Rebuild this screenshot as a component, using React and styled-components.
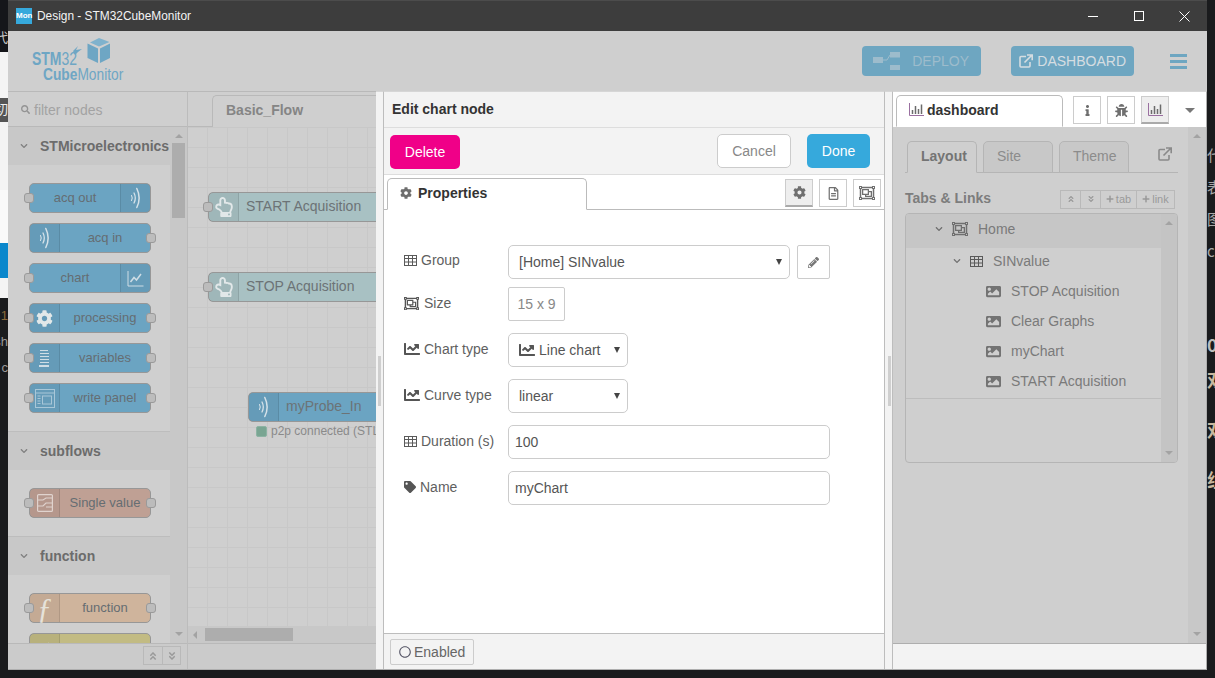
import React from 'react';
import styled, { createGlobalStyle } from 'styled-components';
import {
  FaCog, FaTag, FaChartLine, FaPencilAlt, FaBug, FaInfo, FaRegFileAlt, FaImage,
  FaAngleDoubleUp, FaAngleDoubleDown, FaPlus, FaSearch, FaRegObjectGroup,
  FaRegHandPointUp, FaChevronDown, FaRegCircle, FaRandom,
} from 'react-icons/fa';

const GlobalStyle = createGlobalStyle`
  html, body { margin: 0; padding: 0; height: 678px; overflow: hidden; background: #1a1b1d; }
  body { font-family: "Liberation Sans", Arial, sans-serif; font-size: 14px; }
  * { box-sizing: border-box; }
`;

const Desktop = styled.div`
  display: flex;
  width: 1215px;
  height: 678px;
  overflow: hidden;
`;

const LeftStrip = styled.div`
  width: 8px;
  flex: none;
  display: flex;
  flex-direction: column;
  overflow: hidden;
`;

const Slice = styled.div`
  height: ${p => p.$h}px;
  flex: none;
  display: flex;
  justify-content: flex-end;
  background: ${p => p.$bg};
  color: ${p => p.$fg || '#ccc'};
  font: 13px/${p => p.$h}px "Liberation Sans", "Noto Sans CJK SC", sans-serif;
  white-space: nowrap;
`;

const RightStrip = styled.div`
  width: 8px;
  flex: none;
  display: flex;
  flex-direction: column;
  overflow: hidden;
  background: #1a1b1d;
  padding-top: 147px;
`;

const Fragment = styled.div`
  height: 16px;
  margin-bottom: ${p => p.$gap}px;
  font: ${p => (p.$bold ? 'bold 18px' : '15px')}/16px "Noto Sans CJK SC", sans-serif;
  color: ${p => p.$fg || '#a8a8a8'};
  white-space: nowrap;
`;

const Window = styled.div`
  width: 1199px;
  height: 670px;
  flex: none;
  display: flex;
  flex-direction: column;
  border-bottom: 1px solid #aeaeae;
`;

const TitleBar = styled.div`
  height: 31px;
  flex: none;
  display: flex;
  align-items: center;
  background: #3d3d3d;
  border-top: 1px solid #4c4c4c;
  padding-left: 8px;
  color: #f4f4f4;
  font-size: 11.9px;
`;

const AppIcon = styled.div`
  width: 16px;
  height: 16px;
  margin-right: 5px;
  background: #36a9dc;
  color: #fff;
  font: bold 8px/16px "Liberation Sans", sans-serif;
  text-align: center;
`;

const WinControls = styled.div`
  margin-left: auto;
  display: flex;
  height: 100%;
`;

const WinButton = styled.div`
  width: 45.5px;
  display: flex;
  align-items: center;
  justify-content: center;
`;

const Header = styled.header`
  height: 60px;
  flex: none;
  display: flex;
  align-items: center;
  background: #cfcfcf;
  padding: 0 20px 0 24px;
`;

const Logo = styled.svg`
  width: 92px;
  height: 46px;
  display: block;
  margin-top: -3px;
`;

const HeaderButton = styled.div`
  height: 30px;
  width: ${p => p.$w}px;
  margin-left: ${p => p.$ml || 0};
  display: flex;
  align-items: center;
  justify-content: flex-end;
  gap: ${p => p.$gap || 4}px;
  padding-right: ${p => p.$pr}px;
  background: #6ea6c1;
  border-radius: 4px;
  color: ${p => p.$fg};
  font-size: 14px;
`;

const Hamburger = styled.div`
  width: 17px;
  display: flex;
  flex-direction: column;
  gap: 3px;
  margin-left: 36px;
  span { display: block; height: 3px; background: #6ea6c1; }
`;

const Workspace = styled.div`
  flex: 1;
  min-height: 0;
  display: flex;
`;

const Palette = styled.aside`
  width: 180px;
  flex: none;
  display: flex;
  flex-direction: column;
  background: #cfcfcf;
  border-top: 1px solid #b9b9b9;
  border-right: 1px solid #bcbcbc;
`;

const FilterBar = styled.div`
  height: 35px;
  flex: none;
  display: flex;
  align-items: center;
  gap: 4px;
  padding: 1px 0 0 13px;
  border-bottom: 1px solid #b9b9b9;
  color: #a3a3a3;
  font-size: 14px;
  svg { color: #949494; }
`;

const PaletteBody = styled.div`
  flex: 1;
  min-height: 0;
  display: flex;
`;

const CategoryList = styled.div`
  width: 162px;
  flex: none;
  overflow: hidden;
`;

const CategoryHeader = styled.div`
  height: 38px;
  display: flex;
  align-items: center;
  background: #c8c8c8;
  padding-left: 12px;
  color: #6c6c6c;
  font-weight: bold;
  font-size: 14px;
  white-space: nowrap;
`;

const CategoryContent = styled.div`
  padding: 18px 0 ${p => p.$pb ?? 8}px 21px;
  border-bottom: ${p => (p.$open ? 'none' : '1px solid #bdbdbd')};
`;

const PaletteNode = styled.div`
  position: relative;
  width: 122px;
  height: 30px;
  margin-bottom: 10px;
  display: flex;
  flex-direction: ${p => (p.$iconRight ? 'row-reverse' : 'row')};
  background: ${p => p.$bg};
  border: 1px solid #979797;
  border-radius: 5px;
  color: #656d72;
  font-size: 13px;
  &:last-child { margin-bottom: 0; }
`;

const IconCell = styled.div`
  width: 30px;
  flex: none;
  display: flex;
  align-items: center;
  justify-content: center;
  background: rgba(0, 0, 0, 0.05);
  ${p => (p.$right ? 'border-left' : 'border-right')}: 1px solid rgba(0, 0, 0, 0.1);
  color: #e2e8e9;
`;

const NodeLabel = styled.div`
  flex: 1;
  text-align: center;
  line-height: 27px;
  white-space: nowrap;
`;

const Port = styled.span`
  position: absolute;
  top: 9px;
  ${p => p.$side}: -6px;
  width: 10px;
  height: 10px;
  background: #bcbcbc;
  border: 1px solid #9a9a9a;
  border-radius: 3px;
`;

const VScroll = styled.div`
  flex: 1;
  display: flex;
  flex-direction: column;
  align-items: center;
  background: ${p => p.$bg || '#c8c8c8'};
  padding-top: ${p => p.$pt ?? 7}px;
  padding-bottom: ${p => p.$pb ?? 7}px;
`;

const Arrow = styled.span`
  width: 0;
  height: 0;
  flex: none;
  border-left: 4px solid transparent;
  border-right: 4px solid transparent;
  ${p => (p.$down ? 'border-top' : 'border-bottom')}: 4px solid #a3a3a3;
  margin-top: ${p => (p.$auto ? 'auto' : 0)};
`;

const ScrollThumb = styled.div`
  width: 13px;
  height: ${p => p.$h}px;
  margin-top: 5px;
  background: #adadad;
`;

const BottomBar = styled.div`
  height: 26px;
  flex: none;
  display: flex;
  align-items: center;
  justify-content: flex-end;
  padding-right: 6px;
  background: #cbcbcb;
  border-top: 1px solid #b9b9b9;
`;

const MiniGroup = styled.div`
  display: flex;
  margin-top: ${p => p.$mt ?? -2}px;
`;

const MiniButton = styled.div`
  width: ${p => p.$w || 19}px;
  height: 19px;
  display: flex;
  align-items: center;
  justify-content: center;
  gap: 2px;
  border: 1px solid #b9b9b9;
  margin-left: -1px;
  color: #9a9a9a;
  font-size: 11px;
  font-weight: normal;
`;

const Canvas = styled.main`
  width: 188px;
  flex: none;
  display: flex;
  flex-direction: column;
  background: #cfcfcf;
  border-top: 1px solid #b9b9b9;
`;

const TabBar = styled.div`
  height: 35px;
  flex: none;
  display: flex;
  align-items: flex-end;
  padding-left: 24px;
  border-bottom: 1px solid #b9b9b9;
`;

const FlowTab = styled.div`
  flex: 1;
  height: 32px;
  margin-bottom: -1px;
  padding-left: 13px;
  line-height: 28px;
  background: #cfcfcf;
  border: 1px solid #b9b9b9;
  border-bottom: none;
  border-right: none;
  border-top-left-radius: 5px;
  color: #858585;
  font-weight: bold;
  font-size: 14px;
`;

const Grid = styled.div`
  position: relative;
  flex: 1;
  min-height: 0;
  overflow: hidden;
  background-color: #cfcfcf;
  background-image:
    linear-gradient(to right, transparent 19px, #c8c8c8 19px),
    linear-gradient(to bottom, #c8c8c8 1px, transparent 1px);
  background-size: 20px 20px;
`;

const FlowNode = styled(PaletteNode)`
  position: absolute;
  left: ${p => p.$x}px;
  top: ${p => p.$y}px;
  width: 220px;
  margin: 0;
  font-size: 14px;
  color: #6c7376;
  justify-content: flex-start;
`;

const FlowLabel = styled.div`
  padding-left: ${p => p.$pl}px;
  line-height: 27px;
  white-space: nowrap;
`;

const NodeStatus = styled.div`
  position: absolute;
  left: 68px;
  top: 297px;
  display: flex;
  align-items: center;
  gap: 4px;
  color: #8a8a8a;
  font-size: 12px;
  white-space: nowrap;
  i { width: 11px; height: 11px; background: #79a592; border: 1px solid #8cb3a3; border-radius: 2px; }
`;

const HScroll = styled.div`
  height: 17px;
  flex: none;
  display: flex;
  align-items: center;
  background: #c8c8c8;
  padding-left: 5px;
`;

const HThumb = styled.div`
  width: 88px;
  height: 13px;
  margin-left: 8px;
  background: #adadad;
`;

const HArrow = styled.span`
  width: 0;
  height: 0;
  border-top: 4px solid transparent;
  border-bottom: 4px solid transparent;
  border-right: 4px solid #a3a3a3;
`;

const Tray = styled.section`
  flex: none;
  display: flex;
  background: #f3f3f3;
`;

const Gutter = styled.div`
  position: relative;
  width: 7px;
  flex: none;
  background: #f3f3f3;
  border-top: 1px solid #d6d6d6;
`;

const GripHandle = styled.span`
  position: absolute;
  top: 264px;
  left: ${p => p.$left}px;
  width: 3px;
  height: 50px;
  background: #cfcfcf;
`;

const TrayPanel = styled.div`
  width: 502px;
  flex: none;
  display: flex;
  flex-direction: column;
  background: #fff;
  border-left: 1px solid #bdbdbd;
  border-right: 1px solid #bdbdbd;
  border-top: 1px solid #d6d6d6;
`;

const TrayTitle = styled.div`
  height: 36px;
  flex: none;
  padding-left: 8px;
  line-height: 35px;
  background: #f3f3f3;
  border-bottom: 1px solid #ddd;
  color: #333;
  font-weight: bold;
  font-size: 14px;
`;

const TrayToolbar = styled.div`
  height: 47px;
  flex: none;
  display: flex;
  padding: 6px 14px 0 6px;
  background: #f3f3f3;
  border-bottom: 1px solid #ddd;
`;

const ActionButton = styled.div`
  width: ${p => p.$w}px;
  height: 34px;
  margin-left: ${p => p.$ml || 0};
  margin-top: ${p => p.$mt || 0}px;
  text-align: center;
  line-height: ${p => (p.$bordered ? 32 : 34)}px;
  background: ${p => p.$bg};
  color: ${p => p.$fg};
  border: ${p => (p.$bordered ? '1px solid #ccc' : 'none')};
  border-radius: 5px;
  font-size: 14px;
`;

const TabsRow = styled.div`
  height: 35px;
  flex: none;
  display: flex;
  align-items: flex-end;
  padding-left: 3px;
  border-bottom: 1px solid #bbb;
`;

const PropTab = styled.div`
  width: ${p => p.$w}px;
  height: 32px;
  margin-bottom: -1px;
  display: flex;
  align-items: center;
  gap: ${p => p.$gap ?? 6}px;
  padding-left: ${p => p.$pl}px;
  padding-bottom: 3px;
  background: #fff;
  border: 1px solid #bbb;
  border-bottom: 1px solid #fff;
  border-radius: 5px 5px 0 0;
  color: #333;
  font-weight: bold;
  font-size: 14px;
  svg { color: #6e6e6e; }
`;

const IconTabs = styled.div`
  margin-left: auto;
  display: flex;
  gap: 6px;
  align-self: flex-start;
  margin-top: 4px;
  padding-right: 3px;
`;

const IconTab = styled.div`
  width: 28px;
  height: 28px;
  display: flex;
  align-items: center;
  justify-content: center;
  background: ${p => (p.$active ? '#eee' : '#fff')};
  border: 1px solid #ccc;
  border-bottom: ${p => (p.$active ? '2px solid #aaa' : '1px solid #ccc')};
  color: #6f6f6f;
`;

const FormBody = styled.div`
  flex: 1;
  min-height: 0;
  padding: 35px 0 0 20px;
`;

const FormRow = styled.div`
  display: flex;
  align-items: center;
  margin-bottom: ${p => p.$mb ?? 12}px;
`;

const FormLabel = styled.label`
  width: 104px;
  flex: none;
  display: flex;
  align-items: center;
  gap: ${p => p.$gap ?? 4}px;
  margin-bottom: ${p => p.$mb ?? 2}px;
  color: #5f5f5f;
  font-size: 14px;
  white-space: nowrap;
  svg { color: #555; }
`;

const SelectBox = styled.div`
  width: ${p => p.$w}px;
  height: 34px;
  display: flex;
  align-items: center;
  gap: 4px;
  padding: 0 7px 0 10px;
  background: #fff;
  border: 1px solid #ccc;
  border-radius: 5px;
  color: #555;
  font-size: 14px;
  svg { color: #555; }
`;

const Caret = styled.span`
  margin-left: auto;
  width: 0;
  height: 0;
  border-left: 3px solid transparent;
  border-right: 3px solid transparent;
  border-top: 6px solid #444;
`;

const EditButton = styled.div`
  width: 33px;
  height: 34px;
  margin-left: 7px;
  display: flex;
  align-items: center;
  justify-content: center;
  background: #fff;
  border: 1px solid #ccc;
  border-radius: 2px;
  color: #777;
`;

const SizeButton = styled.div`
  width: 57px;
  height: 34px;
  text-align: center;
  line-height: 32px;
  border: 1px solid #ccc;
  border-radius: 2px;
  color: #888;
  font-size: 14px;
`;

const TextInput = styled.input`
  width: 322px;
  height: 34px;
  padding: 0 6px;
  background: #fff;
  border: 1px solid #ccc;
  border-radius: 5px;
  color: #555;
  font: 14px "Liberation Sans", sans-serif;
  outline: none;
`;

const TrayFooter = styled.div`
  height: 36px;
  flex: none;
  padding: 5px 0 0 6px;
  background: #f3f3f3;
  border-top: 1px solid #bdbdbd;
`;

const EnabledButton = styled.div`
  width: 84px;
  height: 26px;
  display: flex;
  align-items: center;
  gap: 3px;
  padding-left: 8px;
  border: 1px solid #ccc;
  border-radius: 2px;
  color: #666;
  font-size: 14px;
`;

const Sidebar = styled.aside`
  width: 315px;
  flex: none;
  display: flex;
  flex-direction: column;
  background: #f3f3f3;
  border-top: 1px solid #d6d6d6;
  border-left: 1px solid #bdbdbd;
  border-right: 1px solid #aeaeae;
`;

const SidebarTabs = styled.div`
  height: 35px;
  flex: none;
  display: flex;
  align-items: flex-end;
  padding: 0 0 1px 3px;
  background: #fff;
`;

const SidebarIcons = styled.div`
  display: flex;
  gap: 6px;
  align-self: flex-start;
  margin: 4px 0 0 10px;
`;

const DropCaret = styled.span`
  width: 0;
  height: 0;
  align-self: center;
  margin: 2px 0 0 16px;
  border-left: 5px solid transparent;
  border-right: 5px solid transparent;
  border-top: 5px solid #777;
`;

const SidebarContent = styled.div`
  flex: 1;
  min-height: 0;
  display: flex;
  background: #cfcfcf;
`;

const DashboardPane = styled.div`
  width: 295px;
  flex: none;
  padding: 14px 10px 0 12px;
`;

const InnerTabs = styled.div`
  display: flex;
  height: 32px;
  gap: 6px;
  padding-left: 2px;
  border-bottom: 1px solid #b5b5b5;
`;

const InnerTab = styled.div`
  width: 70px;
  height: 32px;
  padding-left: ${p => p.$pl}px;
  line-height: 29px;
  background: ${p => (p.$active ? '#cfcfcf' : '#c8c8c8')};
  border: 1px solid #b5b5b5;
  border-bottom: ${p => (p.$active ? '1px solid #cfcfcf' : '1px solid #b5b5b5')};
  border-radius: 5px 5px 0 0;
  color: ${p => (p.$active ? '#747474' : '#8c8c8c')};
  font-weight: ${p => (p.$active ? 'bold' : 'normal')};
  font-size: 14px;
`;

const PopOut = styled.div`
  margin: 6px 6px 0 auto;
  color: #8a8a8a;
`;

const SectionTitle = styled.div`
  height: 40px;
  display: flex;
  align-items: center;
  justify-content: space-between;
  padding: 9px 3px 0 0;
  color: #7d7d7d;
  font-weight: bold;
  font-size: 14px;
`;

const TreeBox = styled.div`
  width: 273px;
  height: 250px;
  display: flex;
  border: 1px solid #b5b5b5;
  border-radius: 4px;
  overflow: hidden;
`;

const TreeList = styled.div`
  width: 255px;
  flex: none;
`;

const TreeGroup = styled.div`
  height: 185px;
  border-bottom: 1px solid #bdbdbd;
`;

const TreeHead = styled.div`
  height: 34px;
  display: flex;
  align-items: center;
  background: #c6c6c6;
  padding: 0 0 4px 29px;
  color: #7a7a7a;
  font-size: 14px;
  svg { color: #6f6f6f; }
`;

const TreeRow = styled.div`
  height: 30px;
  display: flex;
  align-items: center;
  padding-left: ${p => p.$pl}px;
  padding-bottom: 4px;
  color: #7a7a7a;
  font-size: 14px;
  svg { color: #737373; }
`;

const TreeText = styled.span`
  margin-left: 10px;
`;

const Chevron = styled(FaChevronDown)`
  margin-right: ${p => p.$mr}px;
  color: #7f7f7f;
`;

const SidebarFooter = styled.div`
  height: 26px;
  flex: none;
  background: #f3f3f3;
  border-top: 1px solid #aeaeae;
`;

const WaveIcon = () => (
  <svg width="12" height="22" viewBox="0 0 12 22" fill="none" stroke="#d5e2e9" strokeLinecap="round">
    <path d="M1.5 8.5 Q3 11 1.5 13.5" strokeWidth="1.1" />
    <path d="M4 6 Q6.6 11 4 16" strokeWidth="1.3" />
    <path d="M6.8 1.5 Q11.5 11 6.8 20.5" strokeWidth="1.5" />
  </svg>
);

const ChartOutline = () => (
  <svg width="17" height="17" viewBox="0 0 17 17" fill="none" stroke="#cfdde5" strokeWidth="1">
    <path d="M1 1v15h15.5" />
    <path d="M3.5 12 L7 7.5 L9.5 10 L14 4" strokeWidth="1.5" />
  </svg>
);

const LinesIcon = () => (
  <svg width="11" height="17" viewBox="0 0 11 17" fill="#cfdde5">
    <rect x="1" y="0" width="8" height="1" />
    <rect x="1" y="3" width="9" height="1" />
    <rect x="1" y="6" width="9" height="1" />
    <rect x="1" y="9" width="9" height="1" />
    <rect x="1" y="12" width="9" height="1" />
    <rect x="0" y="15" width="10" height="2" />
  </svg>
);

const PanelIcon = () => (
  <svg width="20" height="19" viewBox="0 0 20 19" fill="none" stroke="#a9c7d8" strokeWidth="1">
    <rect x="0.5" y="0.5" width="19" height="18" />
    <path d="M0.5 4h19" />
    <rect x="7.5" y="7" width="9" height="8" />
    <path d="M2.5 7h3M2.5 9.5h3M2.5 12h3M2.5 14.5h3" />
  </svg>
);

const SubflowIcon = () => (
  <svg width="16" height="18" viewBox="0 0 16 18" fill="none" stroke="#e0d3ce" strokeWidth="1.2">
    <rect x="0.6" y="0.6" width="14.8" height="16.8" rx="1" />
    <path d="M1 6h5l3-2h6M1 12h5l3-3h6M9 13h6" />
  </svg>
);

const FuncGlyph = styled.span`
  font: italic 30px/28px "Liberation Serif", serif;
  color: #e6e2da;
`;

const TableIcon = () => (
  <svg width="13" height="11" viewBox="0 0 13 11" fill="none" stroke="#5a5a5a" strokeWidth="1">
    <rect x="0.5" y="0.5" width="12" height="10" />
    <path d="M0 3.5h13M0 7h13M4.5 1v10M8.5 1v10" />
  </svg>
);

const BarsIcon = () => (
  <svg width="15" height="13" viewBox="0 0 15 13" fill="none" stroke="#6b6b6b">
    <path d="M0.5 0v12.5H15" stroke="#9a6fa0" />
    <path d="M3.5 11V7M6.5 11V3M9.5 11V6M12.5 11V1.5" strokeWidth="1.5" />
  </svg>
);

const ExternalIcon = () => (
  <svg width="14" height="14" viewBox="0 0 14 14" fill="none" stroke="currentColor" strokeWidth="1.6">
    <path d="M7 2.5H2a1 1 0 0 0-1 1V12a1 1 0 0 0 1 1h8a1 1 0 0 0 1-1V8" />
    <path d="M5.5 8.5 12.5 1.5M8 1h5.2v5.2" />
  </svg>
);

const DeployIcon = () => (
  <svg width="27" height="18" viewBox="0 0 27 18" fill="#9dbccc">
    <rect x="0" y="5" width="10" height="6" />
    <rect x="17" y="0" width="10" height="5.5" />
    <rect x="17" y="13" width="10" height="5" />
    <path d="M10 8 L14 8 L17 3" fill="none" stroke="#9dbccc" />
  </svg>
);

const LogoArt = () => (
  <Logo viewBox="0 0 92 46">
    <path d="M58 5.5 L67 1 L77.5 5 L67 9.5Z" fill="#7fb2cd" />
    <path d="M55.5 6.5 L66 11.5 V26 L55.5 21Z" fill="#6ea6c4" />
    <path d="M68 11.5 L78 6.5 V21 L68 26Z" fill="#6ea6c4" />
    <path d="M41 14 L46 9 L44 13 L50 12 L46 15 L43 18Z" fill="#6ea6c4" />
    <text transform="translate(0 28) scale(0.776 1)" fontFamily="Liberation Sans" fontSize="18" fill="#6ea6c4">
      <tspan fontWeight="bold">STM</tspan>32
    </text>
    <text transform="translate(11 43) scale(0.81 1)" fontFamily="Liberation Sans" fontSize="17" fill="#6ea6c4">
      <tspan fontWeight="bold">Cube</tspan>Monitor
    </text>
  </Logo>
);

const paletteBlue = '#6ba4c2';

const stmNodes = [
  { label: 'acq out', icon: <WaveIcon />, iconRight: true, left: true },
  { label: 'acq in', icon: <WaveIcon />, right: true },
  { label: 'chart', icon: <ChartOutline />, iconRight: true, left: true },
  { label: 'processing', icon: <FaCog size={17} />, left: true, right: true },
  { label: 'variables', icon: <LinesIcon />, left: true, right: true },
  { label: 'write panel', icon: <PanelIcon />, left: true, right: true },
];

const Node = ({ label, icon, iconRight, left, right, bg = paletteBlue }) => (
  <PaletteNode $bg={bg} $iconRight={iconRight}>
    <IconCell $right={iconRight}>{icon}</IconCell>
    <NodeLabel>{label}</NodeLabel>
    {left && <Port $side="left" />}
    {right && <Port $side="right" />}
  </PaletteNode>
);

const treeItems = ['STOP Acquisition', 'Clear Graphs', 'myChart', 'START Acquisition'];

export default function App() {
  return (
    <Desktop>
      <GlobalStyle />
      <LeftStrip>
        <Slice $h={30} $bg="#15161a" />
        <Slice $h={16} $bg="#15161a">代</Slice>
        <Slice $h={6} $bg="#15161a" />
        <Slice $h={46} $bg="#f4f4f4" />
        <Slice $h={24} $bg="#555" $fg="#eee">切</Slice>
        <Slice $h={68} $bg="#f4f4f4" />
        <Slice $h={53} $bg="#fafafa" />
        <Slice $h={35} $bg="#0a87cc" />
        <Slice $h={20} $bg="#f4f4f4" />
        <Slice $h={10} $bg="#1a1b1d" />
        <Slice $h={16} $bg="#1a1b1d" $fg="#8a6a3a">1</Slice>
        <Slice $h={10} $bg="#1a1b1d" />
        <Slice $h={16} $bg="#1a1b1d" $fg="#999">sh</Slice>
        <Slice $h={10} $bg="#1a1b1d" />
        <Slice $h={16} $bg="#1a1b1d" $fg="#999">c</Slice>
        <Slice $h={302} $bg="#1a1b1d" />
      </LeftStrip>

      <Window>
        <TitleBar>
          <AppIcon>Mon</AppIcon>
          Design - STM32CubeMonitor
          <WinControls>
            <WinButton>
              <svg width="10" height="10"><path d="M0 5.5h10" stroke="#fff" /></svg>
            </WinButton>
            <WinButton>
              <svg width="10" height="10"><rect x="0.5" y="0.5" width="9" height="9" fill="none" stroke="#fff" /></svg>
            </WinButton>
            <WinButton>
              <svg width="11" height="11"><path d="M0.5 0.5l10 10M10.5 0.5l-10 10" stroke="#fff" /></svg>
            </WinButton>
          </WinControls>
        </TitleBar>

        <Header>
          <LogoArt />
          <HeaderButton $w={119} $ml="auto" $pr={12} $gap={12} $fg="#9dbccc">
            <DeployIcon />
            DEPLOY
          </HeaderButton>
          <HeaderButton $w={123} $ml="30px" $pr={8} $gap={4} $fg="#d5dde1">
            <ExternalIcon />
            DASHBOARD
          </HeaderButton>
          <Hamburger><span /><span /><span /></Hamburger>
        </Header>

        <Workspace>
          <Palette>
            <FilterBar>
              <FaSearch size={9} />
              filter nodes
            </FilterBar>
            <PaletteBody>
              <CategoryList>
                <CategoryHeader>
                  <Chevron size={8} $mr={12} />
                  STMicroelectronics
                </CategoryHeader>
                <CategoryContent $pb={18}>
                  {stmNodes.map(n => <Node key={n.label} {...n} />)}
                </CategoryContent>
                <CategoryHeader>
                  <Chevron size={8} $mr={12} />
                  subflows
                </CategoryHeader>
                <CategoryContent $pb={18}>
                  <Node label="Single value" icon={<SubflowIcon />} bg="#bfa094" left right />
                </CategoryContent>
                <CategoryHeader>
                  <Chevron size={8} $mr={12} />
                  function
                </CategoryHeader>
                <CategoryContent $open>
                  <Node label="function" icon={<FuncGlyph>ƒ</FuncGlyph>} bg="#cfb49c" left right />
                  <Node label="switch" icon={<FaRandom size={13} />} bg="#c2bb83" />
                </CategoryContent>
              </CategoryList>
              <VScroll>
                <Arrow />
                <ScrollThumb $h={75} />
                <Arrow $down $auto />
              </VScroll>
            </PaletteBody>
            <BottomBar>
              <MiniGroup>
                <MiniButton $w={20}><FaAngleDoubleUp size={10} /></MiniButton>
                <MiniButton $w={19}><FaAngleDoubleDown size={10} /></MiniButton>
              </MiniGroup>
            </BottomBar>
          </Palette>

          <Canvas>
            <TabBar>
              <FlowTab>Basic_Flow</FlowTab>
            </TabBar>
            <Grid>
              <FlowNode $bg="#a8c1c3" $x={20} $y={65}>
                <IconCell><FaRegHandPointUp size={20} /></IconCell>
                <FlowLabel $pl={7}>START Acquisition</FlowLabel>
                <Port $side="left" />
              </FlowNode>
              <FlowNode $bg="#a8c1c3" $x={20} $y={145}>
                <IconCell><FaRegHandPointUp size={20} /></IconCell>
                <FlowLabel $pl={7}>STOP Acquisition</FlowLabel>
                <Port $side="left" />
              </FlowNode>
              <FlowNode $bg={paletteBlue} $x={60} $y={265}>
                <IconCell><WaveIcon /></IconCell>
                <FlowLabel $pl={7}>myProbe_In</FlowLabel>
              </FlowNode>
              <NodeStatus><i />p2p connected (STLink)</NodeStatus>
            </Grid>
            <HScroll>
              <HArrow />
              <HThumb />
            </HScroll>
            <BottomBar />
          </Canvas>

          <Tray>
            <Gutter><GripHandle $left={2} /></Gutter>
            <TrayPanel>
              <TrayTitle>Edit chart node</TrayTitle>
              <TrayToolbar>
                <ActionButton $w={70} $mt={1} $bg="#f00088" $fg="#fff">Delete</ActionButton>
                <ActionButton $w={74} $ml="auto" $bordered $bg="#fff" $fg="#888">Cancel</ActionButton>
                <ActionButton $w={63} $ml="16px" $bg="#36a9dc" $fg="#fff">Done</ActionButton>
              </TrayToolbar>
              <TabsRow>
                <PropTab $w={200} $pl={12}>
                  <FaCog size={12} />
                  Properties
                </PropTab>
                <IconTabs>
                  <IconTab $active><FaCog size={13} /></IconTab>
                  <IconTab><FaRegFileAlt size={13} /></IconTab>
                  <IconTab><FaRegObjectGroup size={16} /></IconTab>
                </IconTabs>
              </TabsRow>
              <FormBody>
                <FormRow $mb={8}>
                  <FormLabel $mb={4}><TableIcon />Group</FormLabel>
                  <SelectBox $w={282}>
                    [Home] SINvalue
                    <Caret />
                  </SelectBox>
                  <EditButton><FaPencilAlt size={11} /></EditButton>
                </FormRow>
                <FormRow>
                  <FormLabel $gap={5}><FaRegObjectGroup size={15} />Size</FormLabel>
                  <SizeButton>15 x 9</SizeButton>
                </FormRow>
                <FormRow>
                  <FormLabel><FaChartLine size={16} />Chart type</FormLabel>
                  <SelectBox $w={120}>
                    <FaChartLine size={16} />
                    Line chart
                    <Caret />
                  </SelectBox>
                </FormRow>
                <FormRow>
                  <FormLabel><FaChartLine size={16} />Curve type</FormLabel>
                  <SelectBox $w={120}>
                    linear
                    <Caret />
                  </SelectBox>
                </FormRow>
                <FormRow>
                  <FormLabel><TableIcon />Duration (s)</FormLabel>
                  <TextInput defaultValue="100" />
                </FormRow>
                <FormRow>
                  <FormLabel><FaTag size={12} />Name</FormLabel>
                  <TextInput defaultValue="myChart" />
                </FormRow>
              </FormBody>
              <TrayFooter>
                <EnabledButton>
                  <FaRegCircle size={12} color="#556" />
                  Enabled
                </EnabledButton>
              </TrayFooter>
            </TrayPanel>
            <Gutter><GripHandle $left={3} /></Gutter>
          </Tray>

          <Sidebar>
            <SidebarTabs>
              <PropTab $w={167} $pl={12} $gap={3}>
                <BarsIcon />
                dashboard
              </PropTab>
              <SidebarIcons>
                <IconTab><FaInfo size={11} /></IconTab>
                <IconTab><FaBug size={13} /></IconTab>
                <IconTab $active><BarsIcon /></IconTab>
              </SidebarIcons>
              <DropCaret />
            </SidebarTabs>
            <SidebarContent>
              <DashboardPane>
                <InnerTabs>
                  <InnerTab $active $pl={13}>Layout</InnerTab>
                  <InnerTab $pl={13}>Site</InnerTab>
                  <InnerTab $pl={13}>Theme</InnerTab>
                  <PopOut><ExternalIcon /></PopOut>
                </InnerTabs>
                <SectionTitle>
                  Tabs &amp; Links
                  <MiniGroup $mt={3}>
                    <MiniButton $w={21}><FaAngleDoubleUp size={8} /></MiniButton>
                    <MiniButton $w={21}><FaAngleDoubleDown size={8} /></MiniButton>
                    <MiniButton $w={37}><FaPlus size={8} />tab</MiniButton>
                    <MiniButton $w={39}><FaPlus size={8} />link</MiniButton>
                  </MiniGroup>
                </SectionTitle>
                <TreeBox>
                  <TreeList>
                    <TreeGroup>
                      <TreeHead>
                        <Chevron size={8} $mr={9} />
                        <FaRegObjectGroup size={16} />
                        <TreeText>Home</TreeText>
                      </TreeHead>
                      <TreeRow $pl={47}>
                        <Chevron size={8} $mr={9} />
                        <TableIcon />
                        <TreeText>SINvalue</TreeText>
                      </TreeRow>
                      {treeItems.map(item => (
                        <TreeRow key={item} $pl={80}>
                          <FaImage size={15} />
                          <TreeText>{item}</TreeText>
                        </TreeRow>
                      ))}
                    </TreeGroup>
                  </TreeList>
                  <VScroll $bg="#c4c4c4">
                    <Arrow />
                    <Arrow $down $auto />
                  </VScroll>
                </TreeBox>
              </DashboardPane>
              <VScroll>
                <Arrow />
                <Arrow $down $auto />
              </VScroll>
            </SidebarContent>
            <SidebarFooter />
          </Sidebar>
        </Workspace>
      </Window>

      <RightStrip>
        <Fragment $gap={16}>代</Fragment>
        <Fragment $gap={16}>表</Fragment>
        <Fragment $gap={16}>图</Fragment>
        <Fragment $gap={77}>cl</Fragment>
        <Fragment $gap={19} $bold $fg="#bbb">0</Fragment>
        <Fragment $gap={34} $bold $fg="#c8b8a0">双</Fragment>
        <Fragment $gap={34} $bold $fg="#c8b8a0">双</Fragment>
        <Fragment $gap={0} $bold $fg="#c8b8a0">组</Fragment>
      </RightStrip>
    </Desktop>
  );
}
